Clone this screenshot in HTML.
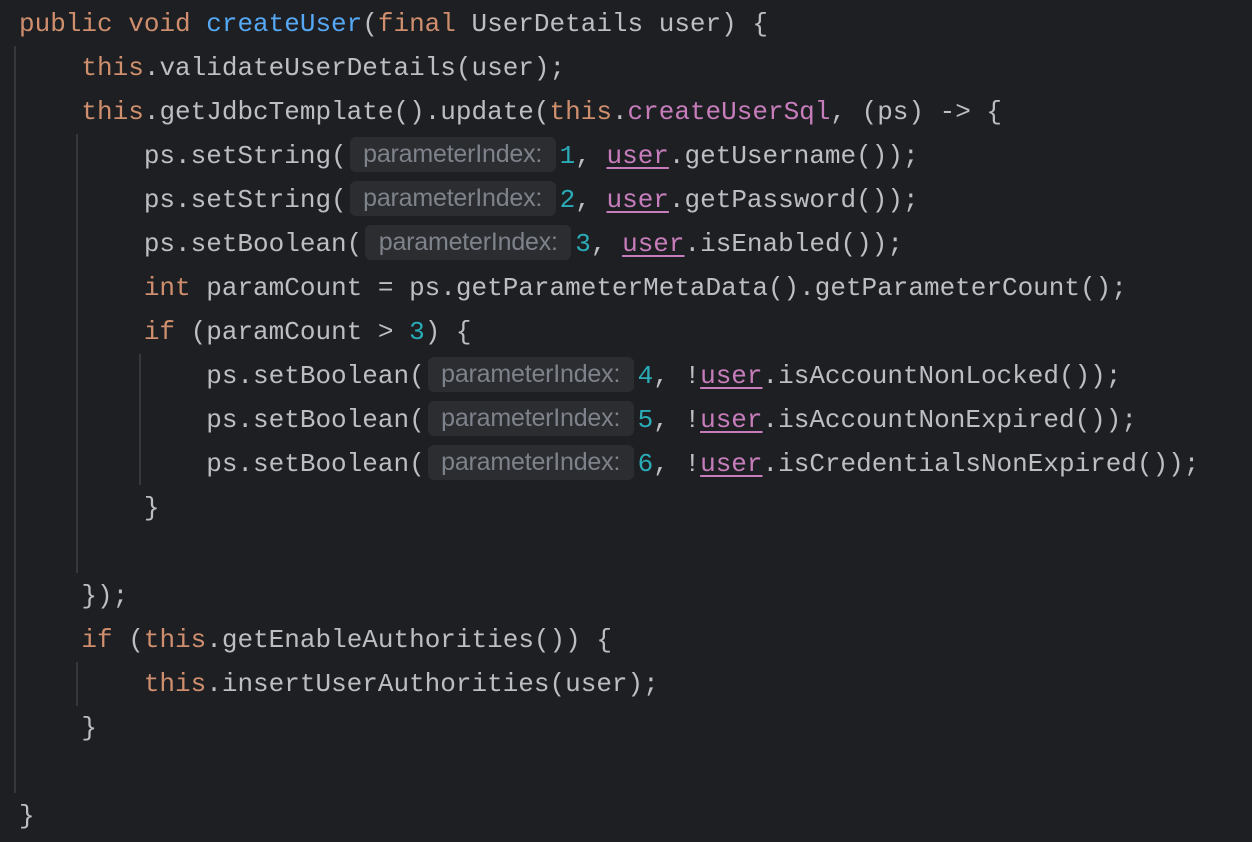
<!DOCTYPE html>
<html><head><meta charset="utf-8"><style>
html,body{margin:0;padding:0;background:#1e1f22;width:1252px;height:842px;overflow:hidden}
.l{position:absolute;left:19px;height:44px;line-height:44px;white-space:pre;font-family:"Liberation Mono","DejaVu Sans Mono",monospace;font-size:26px;color:#bcbec4}
.k{color:#cf8e6d}.m{color:#56a8f5}.n{color:#2aacb8}.f{color:#c77dbb}
.u{color:#c77dbb;text-decoration:underline;text-decoration-color:#c77dbb;text-underline-offset:4px;text-decoration-thickness:2px}
.h{display:inline-block;width:206px;height:35px;line-height:35px;margin:0 4px 0 3px;vertical-align:middle;position:relative;top:-2px;background:#2b2d30;border-radius:6px;color:#7e828a;font-family:"Liberation Sans","DejaVu Sans",sans-serif;font-size:25px;text-align:center;box-sizing:border-box;letter-spacing:-0.2px}
.g{position:absolute;width:2px;background:#36383d}
</style></head><body>
<div class="g" style="left:14px;top:46px;height:747px"></div>
<div class="g" style="left:76px;top:134px;height:439px"></div>
<div class="g" style="left:139px;top:354px;height:131px"></div>
<div class="g" style="left:76px;top:662px;height:44px"></div>

<div class="l" style="top:2px"><span class="k">public void </span><span class="m">createUser</span>(<span class="k">final </span>UserDetails user) {</div>
<div class="l" style="top:46px">    <span class="k">this</span>.validateUserDetails(user);</div>
<div class="l" style="top:90px">    <span class="k">this</span>.getJdbcTemplate().update(<span class="k">this</span>.<span class="f">createUserSql</span>, (ps) -&gt; {</div>
<div class="l" style="top:134px">        ps.setString(<span class="h">parameterIndex:</span><span class="n">1</span>, <span class="u">user</span>.getUsername());</div>
<div class="l" style="top:178px">        ps.setString(<span class="h">parameterIndex:</span><span class="n">2</span>, <span class="u">user</span>.getPassword());</div>
<div class="l" style="top:222px">        ps.setBoolean(<span class="h">parameterIndex:</span><span class="n">3</span>, <span class="u">user</span>.isEnabled());</div>
<div class="l" style="top:266px">        <span class="k">int </span>paramCount = ps.getParameterMetaData().getParameterCount();</div>
<div class="l" style="top:310px">        <span class="k">if </span>(paramCount &gt; <span class="n">3</span>) {</div>
<div class="l" style="top:354px">            ps.setBoolean(<span class="h">parameterIndex:</span><span class="n">4</span>, !<span class="u">user</span>.isAccountNonLocked());</div>
<div class="l" style="top:398px">            ps.setBoolean(<span class="h">parameterIndex:</span><span class="n">5</span>, !<span class="u">user</span>.isAccountNonExpired());</div>
<div class="l" style="top:442px">            ps.setBoolean(<span class="h">parameterIndex:</span><span class="n">6</span>, !<span class="u">user</span>.isCredentialsNonExpired());</div>
<div class="l" style="top:486px">        }</div>
<div class="l" style="top:574px">    });</div>
<div class="l" style="top:618px">    <span class="k">if </span>(<span class="k">this</span>.getEnableAuthorities()) {</div>
<div class="l" style="top:662px">        <span class="k">this</span>.insertUserAuthorities(user);</div>
<div class="l" style="top:706px">    }</div>
<div class="l" style="top:794px">}</div>
</body></html>
